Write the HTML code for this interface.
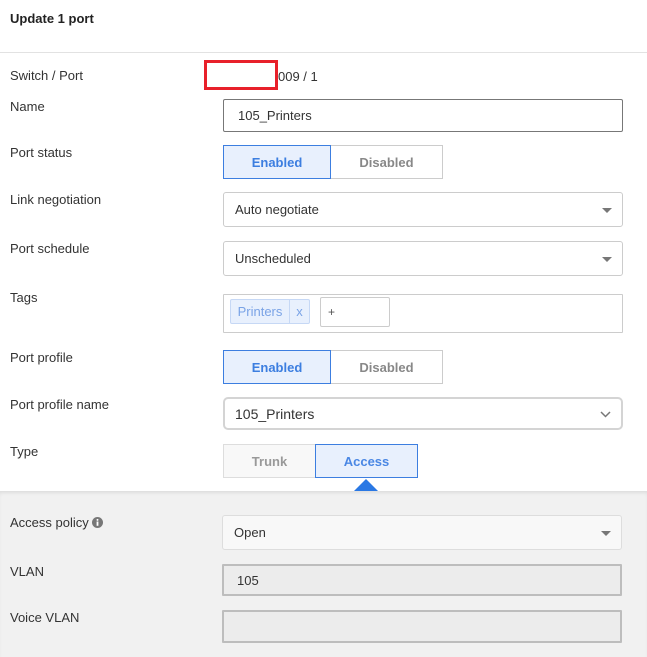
<!DOCTYPE html>
<html><head><style>
*{box-sizing:border-box;margin:0;padding:0}
body{width:647px;height:657px;overflow:hidden;background:#fff;font-family:"Liberation Sans",Arial,sans-serif;font-size:13px;color:#333;position:relative}
.a{position:absolute}
.lbl{position:absolute;left:10px;line-height:16px;color:#333;margin-top:-1px}
.box{position:absolute;border:1px solid #ccc;border-radius:3px;background:#fff;padding-left:11px;display:flex;align-items:center;color:#333}
.caret{position:absolute;right:10px;top:50%;margin-top:-2px;width:0;height:0;border-left:5px solid transparent;border-right:5px solid transparent;border-top:5px solid #777}
.btn{position:absolute;display:flex;align-items:center;justify-content:center;font-weight:bold;font-size:13px}
.on{background:#e8f0fd;border:1px solid #3c7ee0;color:#3c7ee0;z-index:2}
.off{background:#fff;border:1px solid #ccc;color:#888}
</style></head><body>
<div class="a" style="left:10px;top:11px;font-weight:bold;font-size:13px;color:#222">Update 1 port</div>
<div class="a" style="left:0;top:52px;width:647px;height:1px;background:#e2e2e2"></div>

<div class="lbl" style="top:69px">Switch / Port</div>
<div class="a" style="left:204px;top:60px;width:74px;height:30px;border:3px solid #e8202a"></div>
<div class="a" style="left:278px;top:69px;line-height:16px">009 / 1</div>

<div class="lbl" style="top:100px">Name</div>
<div class="box" style="left:223px;top:99px;width:400px;height:33px;border-color:#777;border-radius:2px;padding-left:14px">105_Printers</div>

<div class="lbl" style="top:146px">Port status</div>
<div class="btn on" style="left:223px;top:145px;width:108px;height:34px">Enabled</div>
<div class="btn off" style="left:330px;top:145px;width:113px;height:34px">Disabled</div>

<div class="lbl" style="top:193px">Link negotiation</div>
<div class="box" style="left:223px;top:192px;width:400px;height:35px">Auto negotiate<span class="caret"></span></div>

<div class="lbl" style="top:242px">Port schedule</div>
<div class="box" style="left:223px;top:241px;width:400px;height:35px">Unscheduled<span class="caret"></span></div>

<div class="lbl" style="top:291px">Tags</div>
<div class="box" style="left:223px;top:294px;width:400px;height:39px;border-radius:1px"></div>
<div class="a" style="left:230px;top:299px;width:80px;height:25px;background:#e8f0fd;border:1px solid #c6d8f5;border-radius:2px;color:#7aa3e6;display:flex;align-items:center">
 <span style="width:59px;text-align:center;border-right:1px solid #c6d8f5;height:23px;line-height:23px">Printers</span><span style="flex:1;text-align:center">x</span></div>
<div class="a" style="left:320px;top:297px;width:70px;height:30px;border:1px solid #ccc;border-radius:2px;padding-left:7px;line-height:28px;font-size:12px;color:#555">+</div>

<div class="lbl" style="top:351px">Port profile</div>
<div class="btn on" style="left:223px;top:350px;width:108px;height:34px">Enabled</div>
<div class="btn off" style="left:330px;top:350px;width:113px;height:34px">Disabled</div>

<div class="lbl" style="top:398px">Port profile name</div>
<div class="box" style="left:223px;top:397px;width:400px;height:33px;border:2px solid #d4d4d4;border-radius:5px;padding-left:10px;font-size:14px">105_Printers
 <svg class="a" style="right:10px;top:12px" width="11" height="7" viewBox="0 0 11 7"><path d="M1 1l4.5 4.5L10 1" stroke="#777" stroke-width="1.5" fill="none"/></svg></div>

<div class="lbl" style="top:445px">Type</div>
<div class="btn" style="left:223px;top:444px;width:93px;height:34px;background:#f8f8f8;border:1px solid #ddd;color:#999">Trunk</div>
<div class="btn on" style="left:315px;top:444px;width:103px;height:34px;color:#4a87e4">Access</div>
<div class="a" style="left:354px;top:479px;width:0;height:0;border-left:12px solid transparent;border-right:12px solid transparent;border-bottom:12px solid #2a78e4;z-index:3"></div>

<div class="a" style="left:0;top:491px;width:647px;height:166px;background:#f1f1f1;box-shadow:inset 0 3px 3px -1px #ddd"></div>
<div class="lbl" style="top:516px;color:#333">Access policy <svg style="vertical-align:-1px" width="11" height="11" viewBox="0 0 11 11"><circle cx="5.5" cy="5.5" r="5.5" fill="#777"/><rect x="4.6" y="4.5" width="1.8" height="4.3" fill="#fff"/><circle cx="5.5" cy="2.9" r="1" fill="#fff"/></svg></div>
<div class="box" style="left:222px;top:515px;width:400px;height:35px;background:#f8f8f8;border-color:#ddd">Open<span class="caret"></span></div>

<div class="lbl" style="top:565px">VLAN</div>
<div class="box" style="left:222px;top:564px;width:400px;height:32px;background:#ececec;border:2px solid #bdbdbd;border-radius:1px;padding-left:13px">105</div>

<div class="lbl" style="top:611px">Voice VLAN</div>
<div class="box" style="left:222px;top:610px;width:400px;height:33px;background:#ececec;border:2px solid #bdbdbd;border-radius:1px"></div>
</body></html>
